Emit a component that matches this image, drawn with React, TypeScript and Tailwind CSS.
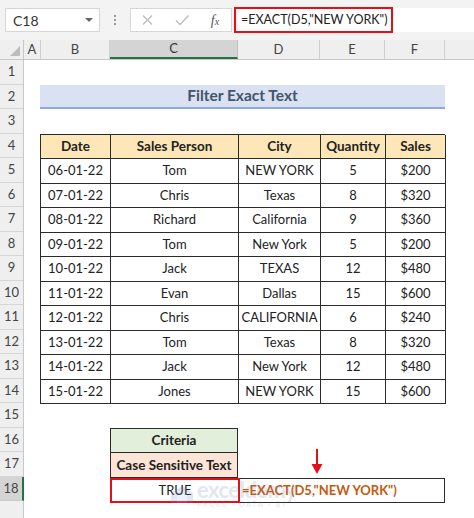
import React from "react";

const FONT = { fontFamily: "Lato, 'Liberation Sans', sans-serif" };

const ROWS = [
  ["06-01-22", "Tom", "NEW YORK", "5", "$200"],
  ["07-01-22", "Chris", "Texas", "8", "$320"],
  ["08-01-22", "Richard", "California", "9", "$360"],
  ["09-01-22", "Tom", "New York", "5", "$200"],
  ["10-01-22", "Jack", "TEXAS", "12", "$480"],
  ["11-01-22", "Evan", "Dallas", "15", "$600"],
  ["12-01-22", "Chris", "CALIFORNIA", "6", "$240"],
  ["13-01-22", "Tom", "Texas", "8", "$320"],
  ["14-01-22", "Jack", "New York", "12", "$480"],
  ["15-01-22", "Jones", "NEW YORK", "15", "$600"],
];

const HEAD = ["Date", "Sales Person", "City", "Quantity", "Sales"];

// table spans B..F, widths match the column headers above
const TABLE_COLS = "grid grid-cols-[70px_128px_82px_65px_60px]";

function Toolbar() {
  return (
    <div className="h-[40px] bg-[#f3f3f3] flex items-start pt-[8px]">
      <div className="ml-[5px] w-[95px] h-[24px] bg-white border border-[#d6d6d6] flex items-center justify-between pl-[7px] pr-[6px]">
        <span className="text-[14px] text-[#333]">C18</span>
        <span className="w-0 h-0 border-l-[4px] border-r-[4px] border-t-[4px] border-l-transparent border-r-transparent border-t-[#666]" />
      </div>
      <div className="w-[30px] h-[24px] flex flex-col items-center justify-center gap-[2px]">
        <span className="w-[2px] h-[2px] bg-[#9a9a9a]" />
        <span className="w-[2px] h-[2px] bg-[#9a9a9a]" />
        <span className="w-[2px] h-[2px] bg-[#9a9a9a]" />
      </div>
      <div className="w-[102px] h-[24px] bg-white border border-[#d6d6d6] flex items-center">
        <svg width="34" height="24" viewBox="0 0 34 24" className="shrink-0">
          <path d="M12 7.5l9 9M21 7.5l-9 9" stroke="#bdbdbd" strokeWidth="1.3" fill="none" />
        </svg>
        <svg width="34" height="24" viewBox="0 0 34 24" className="shrink-0">
          <path d="M11 12.5l4 4 8.5-9" stroke="#bdbdbd" strokeWidth="1.4" fill="none" />
        </svg>
        <span className="w-[34px] text-center text-[14px] italic text-[#555] font-['Liberation_Serif',serif]">
          f<span className="text-[10px]">x</span>
        </span>
      </div>
      <div className="ml-[6px] flex-1 h-[24px] bg-white flex items-center">
        <div className="-ml-[4px] h-[26px] w-[159px] border-[2.5px] border-[#e3101a] flex items-center pl-[5px] text-[12.5px] text-[#222] whitespace-nowrap">
          =EXACT(D5,"NEW YORK")
        </div>
      </div>
    </div>
  );
}

function ColumnHeaders() {
  const cell = "h-full flex items-center justify-center text-[13px] text-[#444] border-r border-[#d0d0d0]";
  return (
    <div className="h-[20px] flex bg-[#efefef] border-b border-[#c8c8c8]">
      <div className="w-[24px] h-full border-r border-[#c8c8c8] relative">
        <span className="absolute right-[3px] bottom-[3px] w-0 h-0" style={{ borderBottom: "10px solid #bdbdbd", borderLeft: "10px solid transparent" }} />
      </div>
      <div className={`${cell} w-[17px]`}>A</div>
      <div className={`${cell} w-[69px]`}>B</div>
      <div className="w-[128px] h-full flex items-center justify-center text-[13px] text-[#333] bg-[#d4d4d4] border-b-[2px] border-[#217346] border-r border-r-[#c0c0c0]">C</div>
      <div className={`${cell} w-[82px]`}>D</div>
      <div className={`${cell} w-[65px]`}>E</div>
      <div className={`${cell} w-[60px]`}>F</div>
      <div className="flex-1" />
    </div>
  );
}

function RowHeaders() {
  return (
    <div className="w-[24px] shrink-0 bg-[#efefef] border-r border-[#c8c8c8] flex flex-col">
      {Array.from({ length: 18 }, (_, i) => (
        <div
          key={i}
          className={
            i === 17
              ? "h-[24.5px] shrink-0 flex items-center justify-center text-[13px] text-[#444] bg-[#d4d4d4] border-b border-[#c8c8c8] border-r-[2px] border-r-[#217346] -mr-px"
              : "h-[24.5px] shrink-0 flex items-center justify-center text-[13px] text-[#444] border-b border-[#d6d6d6]"
          }
        >
          {i + 1}
        </div>
      ))}
      <div className="flex-1" />
    </div>
  );
}

function Watermark() {
  return (
    <div className="absolute left-[146px] top-[1px] flex items-center gap-[3px] opacity-20 pointer-events-none">
      <svg width="24" height="22" viewBox="0 0 24 22">
        <path d="M1 10 L12 3 L23 10 L23 20 L1 20 Z" fill="#6f86b8" />
        <rect x="7" y="11" width="10" height="9" fill="#a9b9db" />
      </svg>
      <div className="flex flex-col leading-none">
        <span className="text-[22px] font-bold text-[#6f86b8] tracking-tight">exceldemy</span>
        <span className="text-[7px] text-[#6f86b8] tracking-[2px]">EXCEL · DATA · BI</span>
      </div>
    </div>
  );
}

function Sheet() {
  return (
    <div className="flex-1 flex flex-col text-[#222]">
      {/* row 1 */}
      <div className="h-[24.5px] shrink-0" />
      {/* row 2: title */}
      <div className="h-[24.5px] shrink-0 pl-[16px]">
        <div className="w-[405px] h-full bg-[#d9e1f2] border-b-[2px] border-[#8ea9db] flex items-center justify-center text-[15.5px] font-bold text-[#44546a]">
          Filter Exact Text
        </div>
      </div>
      {/* row 3 */}
      <div className="h-[24.5px] shrink-0" />
      {/* rows 4-14: data table */}
      <div className="pl-[16px] shrink-0">
        <div className="w-[405px] border-l border-t border-[#2b2b2b]">
          <div className={`${TABLE_COLS} h-[24.5px] bg-[#fde6b8]`}>
            {HEAD.map((h) => (
              <div key={h} className="border-r border-b border-[#2b2b2b] flex items-center justify-center text-[13.5px] font-bold">
                {h}
              </div>
            ))}
          </div>
          {ROWS.map((r) => (
            <div key={r[0]} className={`${TABLE_COLS} h-[24.5px]`}>
              {r.map((v, j) => (
                <div key={j} className="border-r border-b border-[#2b2b2b] flex items-center justify-center text-[13px] whitespace-nowrap">
                  {v}
                </div>
              ))}
            </div>
          ))}
        </div>
      </div>
      {/* row 15 */}
      <div className="h-[24px] shrink-0" />
      {/* rows 16-17: criteria */}
      <div className="pl-[86px] shrink-0 flex">
        <div className="w-[128px] border border-[#2b2b2b]">
          <div className="h-[24px] bg-[#e2efda] border-b border-[#2b2b2b] flex items-center justify-center text-[13.5px] font-bold">
            Criteria
          </div>
          <div className="h-[24px] bg-[#fce4d6] flex items-center justify-center text-[13.5px] font-bold whitespace-nowrap">
            Case Sensitive Text
          </div>
        </div>
        <div className="relative w-[82px]">
          <svg width="14" height="26" viewBox="0 0 14 26" className="absolute left-[72px] top-[21px]">
            <path d="M7 0 V17" stroke="#e3101a" strokeWidth="2" />
            <path d="M1.5 15 L7 25 L12.5 15 Z" fill="#e3101a" />
          </svg>
        </div>
      </div>
      {/* row 18 */}
      <div className="pl-[86px] h-[25px] shrink-0 flex relative">
        <div className="w-[207px] ml-[128px] h-full border border-[#2b2b2b] flex items-center pl-[3px] text-[13px] text-[#c55a11] font-bold whitespace-nowrap">
          =EXACT(D5,"NEW YORK")
        </div>
        <div className="absolute left-[86px] top-0 w-[130px] h-full border-[2.5px] border-[#e3101a] bg-white flex items-center justify-center text-[13px]">
          TRUE
        </div>
        <Watermark />
      </div>
    </div>
  );
}

export default function App() {
  return (
    <div className="w-[474px] h-[518px] bg-white overflow-hidden flex flex-col" style={FONT}>
      <Toolbar />
      <ColumnHeaders />
      <div className="flex-1 flex overflow-hidden">
        <RowHeaders />
        <Sheet />
      </div>
    </div>
  );
}
